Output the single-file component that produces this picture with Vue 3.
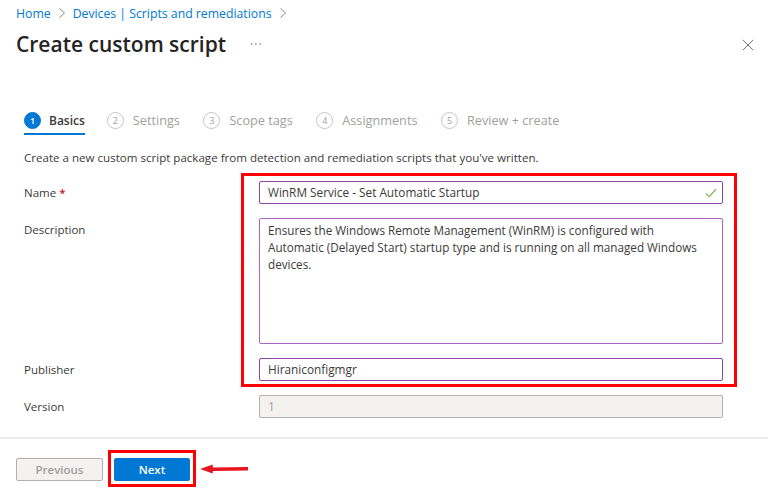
<template>
  <div class="blade">
    <nav class="crumbs">
      <a>Home</a>
      <svg class="chev" viewBox="0 0 8 12"><path d="M1.5 1.5 6.5 6l-5 4.5" /></svg>
      <a>Devices | Scripts and remediations</a>
      <svg class="chev" viewBox="0 0 8 12"><path d="M1.5 1.5 6.5 6l-5 4.5" /></svg>
    </nav>

    <header class="title-row">
      <h1>Create custom script</h1>
      <span class="more">···</span>
      <svg class="close" viewBox="0 0 14 14"><path d="M1 1l12 12M13 1 1 13" /></svg>
    </header>

    <ul class="steps">
      <li v-for="(step, i) in steps" :key="step" class="step" :class="{ active: i === 0 }">
        <span class="num">{{ i + 1 }}</span>
        <span class="step-label">{{ step }}</span>
      </li>
    </ul>

    <p class="intro">Create a new custom script package from detection and remediation scripts that you've written.</p>

    <form class="form">
      <label class="lbl">Name <span class="req">*</span></label>
      <div class="field name-field">
        <span>WinRM Service - Set Automatic Startup</span>
        <svg class="check" viewBox="0 0 14 12"><path d="M1 6.5 4.8 10.5 13 1.5" /></svg>
      </div>

      <label class="lbl">Description</label>
      <div class="field area">Ensures the Windows Remote Management (WinRM) is configured with Automatic (Delayed Start) startup type and is running on all managed Windows devices.</div>

      <label class="lbl">Publisher</label>
      <div class="field">Hiraniconfigmgr</div>

      <label class="lbl">Version</label>
      <div class="field disabled">1</div>
    </form>

    <footer class="actions">
      <button type="button" class="btn prev">Previous</button>
      <button type="button" class="btn next">Next</button>
    </footer>

    <!-- screenshot annotations -->
    <div class="mark mark-form"></div>
    <div class="mark mark-next"></div>
    <svg class="arrow" viewBox="0 0 50 12"><path d="M0 6 13 1.5v3L49 4v3.6L13 8v2.6z" /></svg>
  </div>
</template>

<script setup>
const steps = ['Basics', 'Settings', 'Scope tags', 'Assignments', 'Review + create']
</script>

<style>
html, body {
  margin: 0;
  background: #fff;
}
</style>

<style scoped>
.blade {
  position: relative;
  width: 768px;
  height: 495px;
  overflow: hidden;
  box-sizing: border-box;
  font-family: "Open Sans", "Noto Sans", sans-serif;
  font-size: 12px;
  color: #3b3a39;
}

.crumbs {
  display: flex;
  align-items: center;
  gap: 7px;
  height: 14px;
  padding: 6px 0 0 16px;
  font-size: 12.25px;
  color: #0078d4;
}

.chev {
  width: 8px;
  height: 12px;
  fill: none;
  stroke: #8a8886;
  stroke-width: 1;
}

.title-row {
  position: relative;
  display: flex;
  align-items: center;
  height: 30px;
  margin-top: 9px;
  padding-left: 16px;
}

h1 {
  margin: 0;
  font-size: 21px;
  font-weight: 600;
  color: #252423;
}

.more {
  margin-left: 24px;
  font-size: 12px;
  letter-spacing: 1px;
  color: #8a8886;
}

.close {
  position: absolute;
  right: 14px;
  top: 10px;
  width: 12px;
  height: 12px;
  fill: none;
  stroke: #605e5c;
  stroke-width: 1;
}

.steps {
  display: flex;
  gap: 23.5px;
  margin: 48px 0 0;
  padding: 0 0 0 24px;
  list-style: none;
}

.step {
  display: flex;
  align-items: center;
  gap: 9px;
  height: 26px;
  padding-bottom: 2px;
  font-size: 12.7px;
  color: #a19f9d;
}

.step.active {
  gap: 8px;
  margin-right: -1.5px;
  font-size: 12px;
  font-weight: 600;
  color: #3b3a39;
  box-shadow: inset 0 -2px 0 #0078d4;
}

.num {
  display: flex;
  align-items: center;
  justify-content: center;
  box-sizing: border-box;
  width: 17px;
  height: 17px;
  border: 1px solid #c8c6c4;
  border-radius: 50%;
  font-size: 9px;
  font-weight: 400;
  color: #a19f9d;
}

.active .num {
  border-color: #0078d4;
  background: #0078d4;
  font-weight: 600;
  color: #fff;
}

.intro {
  margin: 14px 0 0;
  padding-left: 24px;
  line-height: 17px;
  font-size: 11.57px;
}

.form {
  display: grid;
  grid-template-columns: 235px 464px;
  row-gap: 14px;
  margin-top: 15px;
  padding-left: 24px;
}

.lbl {
  line-height: 23px;
  font-size: 11.5px;
}

.req {
  font-weight: 600;
  color: #c50f1f;
}

.field {
  box-sizing: border-box;
  height: 23px;
  padding: 0 8px;
  border: 1px solid #8e44ad;
  border-radius: 2px;
  line-height: 21px;
  font-size: 11.8px;
  background: #fff;
}

.name-field {
  display: flex;
  align-items: center;
  justify-content: space-between;
}

.check {
  width: 12px;
  height: 10px;
  margin-right: -3px;
  fill: none;
  stroke: #7fba4a;
  stroke-width: 1.4;
}

.area {
  height: 126px;
  padding: 3px 20px 0 8px;
  line-height: 17px;
  font-size: 11.7px;
  border-color: #a864c4;
}

.disabled {
  border-color: #b3b0ad;
  background: #f3f2f1;
  color: #a19f9d;
}

.actions {
  display: flex;
  gap: 11px;
  margin-top: 19px;
  padding: 19px 0 0 16px;
  border-top: 2px solid #edebe9;
}

.btn {
  box-sizing: border-box;
  height: 23px;
  padding: 0;
  border-radius: 2px;
  font-family: inherit;
  font-size: 11.5px;
  font-weight: 600;
}

.prev {
  width: 87px;
  border: 1px solid #b3b0ad;
  background: #f3f2f1;
  color: #a19f9d;
}

.next {
  width: 76px;
  border: 1px solid #0078d4;
  background: #0078d4;
  color: #fff;
}

.mark {
  position: absolute;
  box-sizing: border-box;
  border: 3px solid #f00;
}

.mark-form {
  left: 241px;
  top: 173px;
  width: 496px;
  height: 214px;
}

.mark-next {
  left: 108px;
  top: 450px;
  width: 88px;
  height: 37px;
}

.arrow {
  position: absolute;
  left: 200px;
  top: 463px;
  width: 49px;
  height: 12px;
  fill: #e8141c;
}
</style>
